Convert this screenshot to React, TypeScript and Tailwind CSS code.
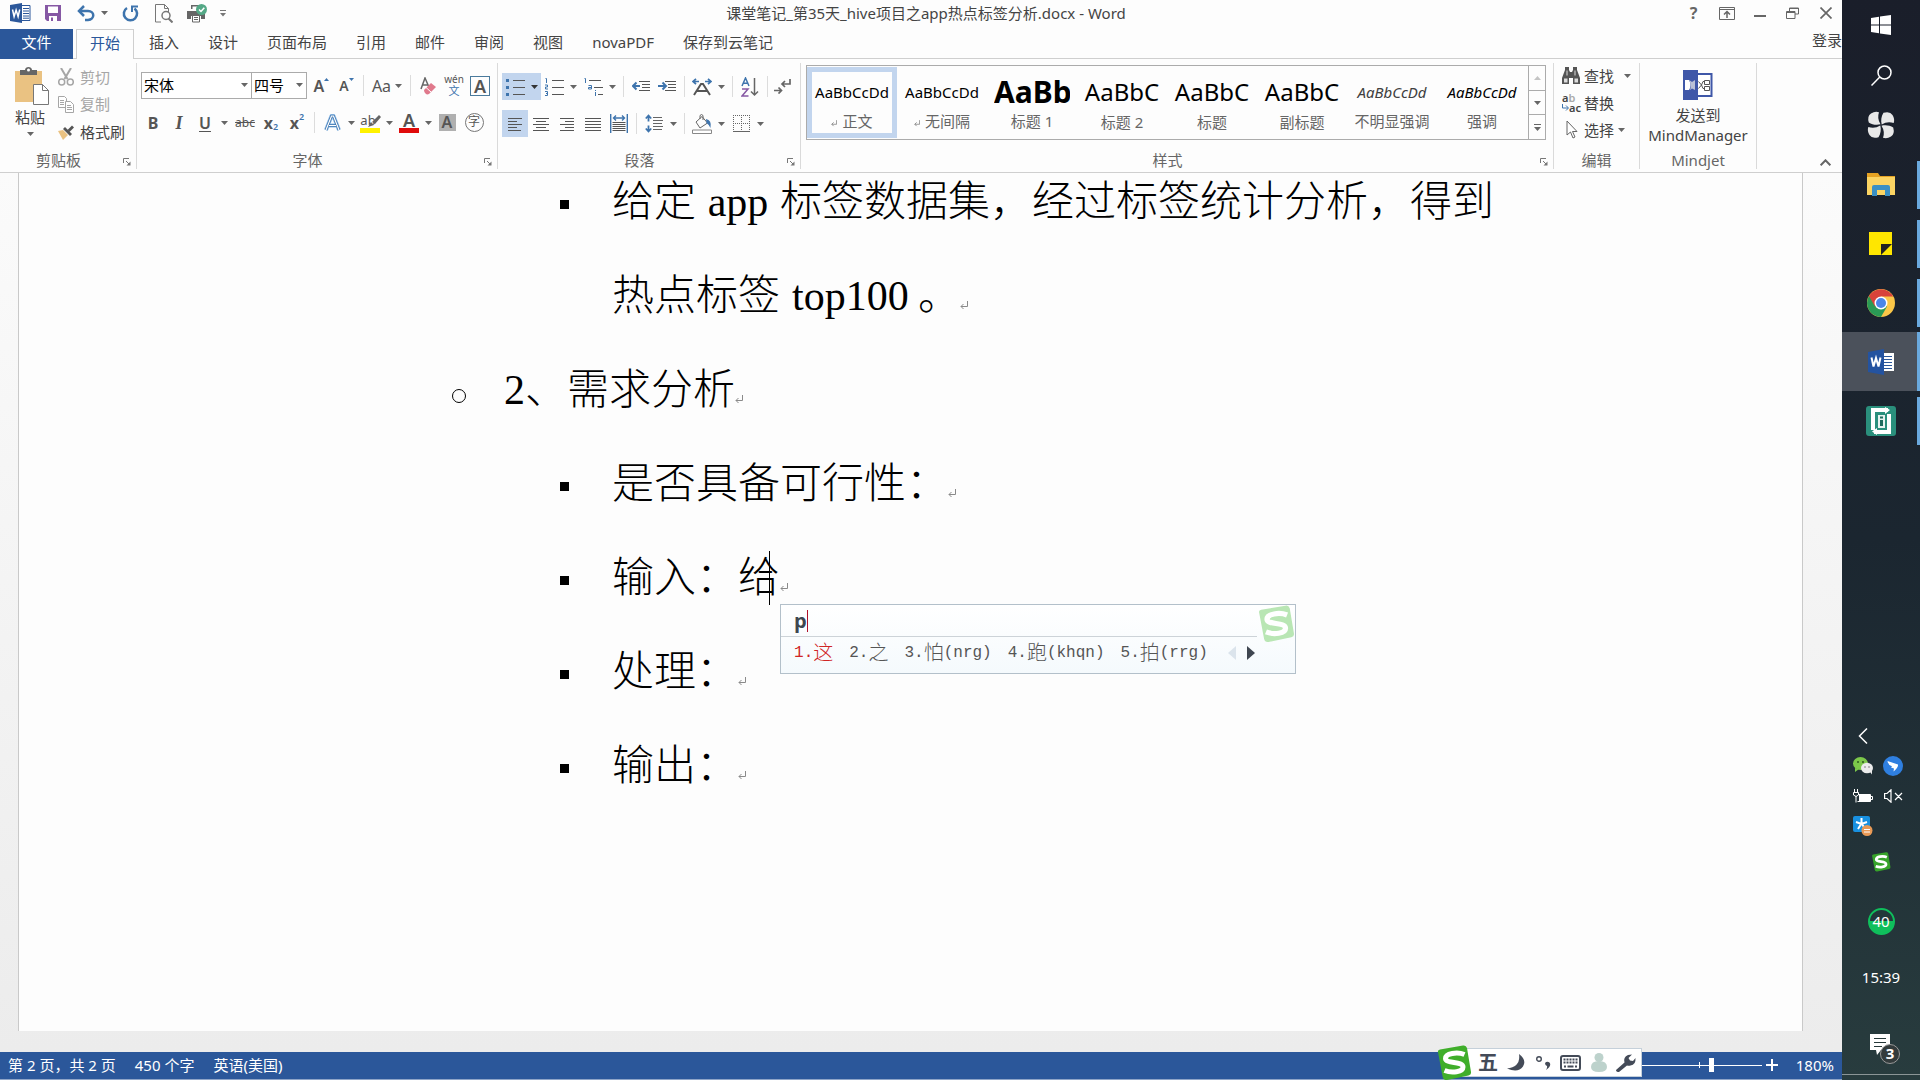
import { ReactNode } from "react";
import clsx from "clsx";

const TABS = ["插入", "设计", "页面布局", "引用", "邮件", "审阅", "视图", "novaPDF", "保存到云笔记"];

const STYLES = [
  { name: "正文", sample: "AaBbCcDd", look: "text-[15px] text-black", mark: true, selected: true },
  { name: "无间隔", sample: "AaBbCcDd", look: "text-[15px] text-black", mark: true },
  { name: "标题 1", sample: "AaBb", look: "text-[30px] font-bold text-black" },
  { name: "标题 2", sample: "AaBbC", look: "text-2xl text-black" },
  { name: "标题", sample: "AaBbC", look: "text-2xl text-black" },
  { name: "副标题", sample: "AaBbC", look: "text-2xl text-black" },
  { name: "不明显强调", sample: "AaBbCcDd", look: "text-[15px] italic text-[#404040]" },
  { name: "强调", sample: "AaBbCcDd", look: "text-[15px] italic text-black" },
];

const CANDIDATES = [
  { word: "这", code: "" },
  { word: "之", code: "" },
  { word: "怕", code: "(nrg)" },
  { word: "跑", code: "(khqn)" },
  { word: "拍", code: "(rrg)" },
];

/* ---------- small shared pieces ---------- */

function Caret({ className = "text-[#666]" }: { className?: string }) {
  return (
    <svg width="7" height="4" viewBox="0 0 7 4" className={className}>
      <path d="M0 0h7L3.5 4z" fill="currentColor" />
    </svg>
  );
}

type ToolProps = {
  label: string;
  children: ReactNode;
  className?: string;
  active?: boolean;
};

function Tool({ label, children, className = "w-[26px]", active }: ToolProps) {
  return (
    <button
      aria-label={label}
      className={clsx(
        "flex h-[27px] shrink-0 items-center justify-center",
        className,
        active && "bg-[#c2d5ee]"
      )}
    >
      {children}
    </button>
  );
}

function DropTool({ label, children, active }: ToolProps) {
  return (
    <button
      aria-label={label}
      className={clsx("flex h-[27px] w-[39px] shrink-0 items-center", active && "bg-[#c2d5ee]")}
    >
      <span className="flex w-[26px] justify-center">{children}</span>
      <span className="flex w-[13px] justify-center">
        <Caret className={active ? "text-[#333]" : "text-[#666]"} />
      </span>
    </button>
  );
}

function Sep() {
  return <div className="mx-1 h-[21px] w-px shrink-0 bg-[#dcdcdc]" />;
}

type GroupProps = {
  title: string;
  children: ReactNode;
  className?: string;
  launcher?: boolean;
};

function Group({ title, children, className, launcher }: GroupProps) {
  return (
    <section className={clsx("mt-1 flex h-[106px] flex-col border-r border-[#dadada]", className)}>
      <div className="min-h-0 flex-1">{children}</div>
      <div className="flex h-[18px] items-center text-[#666]">
        <h2 className="flex-1 text-center leading-[18px]">{title}</h2>
        {launcher && (
          <button aria-label={`${title}设置`} className="flex w-[19px] justify-center pt-1">
            <svg width="8" height="8" viewBox="0 0 8 8" fill="none" stroke="#777">
              <path d="M.5 5V.5H6M3 3l4 4" />
              <path d="M7.5 3.5v4h-4z" fill="#777" stroke="none" />
            </svg>
          </button>
        )}
      </div>
    </section>
  );
}

function ParaMark({ className = "text-[#8a8a8a]" }: { className?: string }) {
  return (
    <svg width="8" height="9" viewBox="0 0 8 9" fill="none" stroke="currentColor" className={className}>
      <path d="M7.5 0v5.5H1" />
      <path d="M3.5 3L1 5.5 3.5 8" />
    </svg>
  );
}

function SogouLogo({ size, className }: { size: number; className?: string }) {
  return (
    <svg width={size} height={size} viewBox="0 0 36 36" className={className}>
      <path d="M2 7Q1.500 5 4 4.500L27 .6Q30 0 31 3l4 24q.5 3-2.500 3.600L11 35q-3.500.600-4.300-3z" fill="currentColor" />
      <path
        d="M28.500 9.500C21 6.500 9.500 8.500 9.500 13.500c0 5.500 17.500 2.500 17.500 8.500C27 27 16 28.500 8.500 25.500"
        fill="none"
        stroke="#fff"
        strokeWidth="5"
      />
    </svg>
  );
}

function WordLogo() {
  return (
    <svg width="21" height="20" viewBox="0 0 21 20">
      <path d="M11 2.500h9v15h-9z" fill="#fff" stroke="#2b579a" />
      <path d="M13 5.500h6M13 8h6M13 10.500h6M13 13h6M13 15.200h6" stroke="#2b579a" />
      <path d="M0 2l12-2v20L0 18z" fill="#2b579a" />
      <path d="M2.500 6.500l1.600 7 2-6.500 2 6.500 1.600-7" fill="none" stroke="#fff" strokeWidth="1.500" />
    </svg>
  );
}

/* ---------- title bar and tabs ---------- */

function TitleBar() {
  return (
    <header className="flex h-[29px] items-center pb-[3px] text-[#444]">
      <div className="flex flex-1 items-center pl-[10px]">
        <WordLogo />
        <button aria-label="保存" className="ml-[14px]">
          <svg width="16" height="16" viewBox="0 0 16 16">
            <path d="M0 0h16v16H2l-2-2z" fill="#8658a4" />
            <path d="M3 1.500h10V8H3zM4 11h8v5H4z" fill="#fff" />
            <path d="M6 12.500h2V16H6z" fill="#8658a4" />
          </svg>
        </button>
        <button aria-label="撤消" className="ml-4 flex items-center gap-[6px]">
          <svg width="18" height="17" viewBox="0 0 18 17" fill="none" stroke="#3e74ad" strokeWidth="2.500">
            <path d="M2 6h9c7 0 7 8.500 0 9H8" />
            <path d="M7 1L2 6l5 5" />
          </svg>
          <Caret />
        </button>
        <button aria-label="恢复" className="ml-[14px]">
          <svg width="17" height="17" viewBox="0 0 17 17" fill="none" stroke="#3e74ad" strokeWidth="2.500">
            <path d="M5 3a6.600 6.600 0 1 0 7.500.4" />
            <path d="M10 7V1.500h6" strokeWidth="2" />
          </svg>
        </button>
        <button aria-label="打印预览" className="ml-4">
          <svg width="18" height="19" viewBox="0 0 18 19" fill="none" stroke="#777">
            <path d="M6 18H.5V.5h9l4 4V8M9.500.5v4h4" />
            <circle cx="11" cy="11.500" r="4" strokeWidth="1.500" />
            <path d="M13.500 14.500l4 4" strokeWidth="2" />
          </svg>
        </button>
        <button aria-label="快速打印" className="ml-[14px]">
          <svg width="20" height="19" viewBox="0 0 20 19">
            <path d="M4 1h8v4H4zM0 7h18v8h-4v-3H4v3H0z" fill="#666" />
            <path d="M5.500 2.500h6V7h-6z" fill="#fff" />
            <path d="M5.500 11.500h7V18h-7z" fill="#fff" stroke="#666" />
            <path d="M7 13.500h4M7 15.500h4" stroke="#666" />
            <circle cx="14.500" cy="5.500" r="5.500" fill="#54a886" />
            <path d="M12 5.500l2 2 3.300-3.700" fill="none" stroke="#fff" strokeWidth="1.500" />
          </svg>
        </button>
        <button aria-label="自定义快速访问工具栏" className="ml-[13px]">
          <svg width="6" height="7" viewBox="0 0 6 7" fill="#777">
            <path d="M0 0h6v1H0zM0 3h6L3 6.500z" />
          </svg>
        </button>
      </div>
      <h1 className="text-[15px]">课堂笔记_第35天_hive项目之app热点标签分析.docx - Word</h1>
      <div className="flex flex-1 items-center justify-end text-[#666]">
        <Tool label="帮助" className="w-[33px] text-base font-bold">?</Tool>
        <Tool label="功能区显示选项" className="w-[33px]">
          <svg width="16" height="13" viewBox="0 0 16 13" fill="none" stroke="currentColor">
            <path d="M.5.5h15v12H.5zM.5 2.500h15" />
            <path d="M8 11V5M5 7.500l3-3 3 3" strokeWidth="1.500" />
          </svg>
        </Tool>
        <Tool label="最小化" className="w-[33px]">
          <svg width="12" height="10" viewBox="0 0 12 10">
            <path d="M0 7h12v2H0z" fill="currentColor" />
          </svg>
        </Tool>
        <Tool label="还原" className="w-[33px]">
          <svg width="13" height="12" viewBox="0 0 13 12" fill="none" stroke="currentColor">
            <path d="M3.500 4V1h9v6H9M.5 4.500H9v7H.5zM.5 5.500H9M3.500 1.500h9" />
          </svg>
        </Tool>
        <Tool label="关闭" className="w-[33px]">
          <svg width="12" height="12" viewBox="0 0 12 12" stroke="currentColor" strokeWidth="1.700">
            <path d="M.5.5l11 11M11.500.5l-11 11" />
          </svg>
        </Tool>
      </div>
    </header>
  );
}

function TabBar() {
  return (
    <nav className="flex h-[30px] items-stretch gap-px border-b border-[#cfcfcf] text-[#444]">
      <button className="mr-[2px] h-[30px] w-[73px] bg-[#2b579a] pb-1 text-white">文件</button>
      <button className="h-[30px] border border-b-0 border-[#cfcfcf] bg-[#fdfdfd] px-[13px] pb-1 text-[#2b579a]">
        开始
      </button>
      {TABS.map((tab) => (
        <button key={tab} className="px-[14px] pb-1">
          {tab}
        </button>
      ))}
      <a href="#login" className="ml-auto self-start leading-[23px]">
        登录
      </a>
    </nav>
  );
}

/* ---------- ribbon ---------- */

function ClipboardGroup() {
  return (
    <Group title="剪贴板" className="w-[137px]" launcher>
      <div className="flex text-[#444]">
        <button className="flex w-[64px] flex-col items-center pt-1">
          <svg width="36" height="39" viewBox="0 0 36 39">
            <path d="M1 4h27v31H1z" fill="#eac282" />
            <path d="M6 3h5c0-4 7-4 7 0h5v5H6z" fill="#666" />
            <circle cx="14.500" cy="3" r="1.500" fill="#fff" />
            <path d="M19.500 17.500h9l6 6v14h-15z" fill="#fff" stroke="#777" />
            <path d="M28.500 17.500v6h6" fill="none" stroke="#777" />
          </svg>
          <span className="pr-1 leading-[22px]">粘贴</span>
          <span className="flex h-3 items-center pr-1">
            <Caret />
          </span>
        </button>
        <div className="-ml-[6px] flex flex-col">
          <button className="flex h-[27px] items-center gap-[6px] text-[#a6a6a6]">
            <svg width="16" height="18" viewBox="0 0 16 18" fill="none" stroke="currentColor">
              <path d="M3 0l6.500 11M13 0L6.500 11" strokeWidth="2" />
              <circle cx="3.700" cy="14" r="3" strokeWidth="1.500" />
              <circle cx="12.300" cy="14" r="3" strokeWidth="1.500" />
            </svg>
            剪切
          </button>
          <button className="flex h-7 items-center gap-[6px] text-[#a6a6a6]">
            <svg width="16" height="17" viewBox="0 0 16 17" fill="#fff" stroke="currentColor">
              <path d="M.5.5h6l2 2v9h-8z" />
              <path d="M2 4.500h4M2 6.500h4M2 8.500h4" />
              <path d="M7.500 5.500h5l3 3v8h-8z" />
              <path d="M9 9.500h4M9 11.500h5M9 13.500h5" />
            </svg>
            复制
          </button>
          <button className="flex h-7 items-center gap-[6px]">
            <svg width="16" height="15" viewBox="0 0 16 15">
              <path d="M0 6l5-1 5 5-5 5z" fill="#eac282" />
              <path d="M5 4l2-2 7 7-2 2z" fill="#555" />
              <path d="M9.500 5L14 .5l2 2L11.500 7z" fill="#555" />
            </svg>
            格式刷
          </button>
        </div>
      </div>
    </Group>
  );
}

function ComboBox({ label, value, className }: { label: string; value: string; className: string }) {
  return (
    <div className={clsx("relative", className)}>
      <select
        aria-label={label}
        className="h-[27px] w-full appearance-none border border-[#ababab] bg-white pb-px pl-[2px] text-black"
      >
        <option>{value}</option>
      </select>
      <Caret className="pointer-events-none absolute top-[11px] right-1 text-[#666]" />
    </div>
  );
}

function FontGroup() {
  return (
    <Group title="字体" className="w-[361px]" launcher>
      <div className="flex flex-col gap-[10px] pt-[9px] pl-1 text-[#555]">
        <div className="flex items-center">
          <ComboBox label="字体" value="宋体" className="w-[111px]" />
          <ComboBox label="字号" value="四号" className="mr-[2px] -ml-px w-[56px]" />
          <Tool label="增大字号" className="w-[25px]">
            <span className="text-base font-semibold">A</span>
            <svg width="5" height="3" viewBox="0 0 5 3" className="mb-3">
              <path d="M0 3h5L2.500 0z" fill="#3e74ad" />
            </svg>
          </Tool>
          <Tool label="减小字号" className="w-[25px]">
            <span className="text-sm font-semibold">A</span>
            <svg width="5" height="3" viewBox="0 0 5 3" className="mb-3">
              <path d="M0 0h5L2.500 3z" fill="#3e74ad" />
            </svg>
          </Tool>
          <Sep />
          <Tool label="更改大小写" className="w-[38px] gap-1">
            <span className="text-base">Aa</span>
            <Caret />
          </Tool>
          <Sep />
          <Tool label="清除所有格式">
            <svg width="17" height="18" viewBox="0 0 17 18">
              <path d="M1 12L5 1l3.500 8M2.500 8h5" fill="none" stroke="#666" strokeWidth="1.500" />
              <path d="M4 13l7-7 5 4-7 7q-2 1-3.500-.500T4 13z" fill="#e0798c" />
              <path d="M6 10.500l5 4.500" stroke="#fff" />
            </svg>
          </Tool>
          <Tool label="拼音指南" className="w-[26px] flex-col">
            <span className="text-[10px] leading-[10px]">wén</span>
            <span className="text-[11px] leading-[13px] text-[#3e74ad]">文</span>
          </Tool>
          <Tool label="字符边框">
            <span className="h-5 w-5 border border-[#4a7a9c] text-center text-lg leading-[18px] font-semibold">A</span>
          </Tool>
        </div>
        <div className="flex items-center">
          <Tool label="加粗" className="w-[24px] text-base font-bold">B</Tool>
          <Tool label="倾斜" className="w-[28px] font-[family-name:'Liberation_Serif',serif] text-lg font-bold italic">
            I
          </Tool>
          <Tool label="下划线" className="w-[24px] text-base font-semibold underline underline-offset-2">U</Tool>
          <Tool label="下划线样式" className="w-[15px]"><Caret /></Tool>
          <Tool label="删除线"><span className="text-xs line-through">abc</span></Tool>
          <Tool label="下标">
            <span className="text-base font-bold">x</span>
            <span className="mt-2 text-[9px] font-semibold text-[#3e74ad]">2</span>
          </Tool>
          <Tool label="上标">
            <span className="text-base font-bold">x</span>
            <span className="mb-3 text-[9px] font-semibold text-[#3e74ad]">2</span>
          </Tool>
          <Sep />
          <Tool label="文本效果">
            <svg width="17" height="18" viewBox="0 0 17 18" fill="none">
              <path d="M2 16L7.500 2h2L15 16M5 11.500h7" stroke="#8fbde8" strokeWidth="4" strokeLinejoin="round" />
              <path d="M2 16L7.500 2h2L15 16M5 11.500h7" stroke="#3e74ad" strokeWidth="2.600" />
              <path d="M2 16L7.500 2h2L15 16M5 11.500h7" stroke="#fff" strokeWidth="1.200" />
            </svg>
          </Tool>
          <Tool label="文本效果选项" className="w-[13px]"><Caret /></Tool>
          <Tool label="突出显示" className="w-[24px] flex-col">
            <span className="relative pr-1 text-[13px] leading-[14px]">
              ab
              <svg width="13" height="13" viewBox="0 0 13 13" className="absolute top-[2px] left-2">
                <path d="M0 12l3-5 3 3zM4 7l7-7 2 2-6 7z" fill="#666" />
              </svg>
            </span>
            <span className="mt-px h-[5px] w-5 bg-[#fff200]" />
          </Tool>
          <Tool label="突出显示颜色" className="w-[15px]"><Caret /></Tool>
          <Tool label="字体颜色" className="w-[24px] flex-col">
            <span className="text-lg leading-[15px] font-semibold">A</span>
            <span className="h-[5px] w-5 bg-[#e00b0b]" />
          </Tool>
          <Tool label="字体颜色选项" className="w-[15px]"><Caret /></Tool>
          <Tool label="字符底纹" className="w-[22px]">
            <span className="h-[17px] w-[17px] bg-[#b0b0b0] text-center text-base leading-[17px] font-semibold">A</span>
          </Tool>
          <Tool label="带圈字符" className="w-[32px]">
            <span className="h-[19px] w-[19px] rounded-full border border-[#777] text-center text-xs leading-[16px]">
              字
            </span>
          </Tool>
        </div>
      </div>
    </Group>
  );
}

function AlignIcon({ d }: { d: string }) {
  return (
    <svg width="16" height="14" viewBox="0 0 16 14" stroke="#555" fill="none">
      <path d={d} />
    </svg>
  );
}

function ParagraphGroup() {
  return (
    <Group title="段落" className="w-[303px]" launcher>
      <div className="flex flex-col gap-[10px] pt-[10px] pl-1">
        <div className="flex items-center">
          <DropTool label="项目符号" active>
            <svg width="19" height="18" viewBox="0 0 19 18">
              <path d="M7 2.500h12M7 9.500h12M7 16.500h12" stroke="#555" />
              <path d="M0 1h3v3H0zM0 8h3v3H0zM0 15h3v3H0z" fill="#3e74ad" />
            </svg>
          </DropTool>
          <DropTool label="编号">
            <svg width="19" height="18" viewBox="0 0 19 18" fill="none">
              <path d="M7 2.500h12M7 9.500h12M7 16.500h12" stroke="#555" />
              <path d="M.5.5h1V5M0 7h2.500v2H.5v2H3M0 13.500h2.500v4H0M1 15.500h1.500" stroke="#3e74ad" />
            </svg>
          </DropTool>
          <DropTool label="多级列表">
            <svg width="19" height="18" viewBox="0 0 19 18" fill="none">
              <path d="M5 2.500h12M10 9.500h9M14 16.500h5" stroke="#555" />
              <path d="M.5.5h1V5M4.500 7.500h3V11h-3V9.500h3M11.500 14v4M11.500 12v1" stroke="#3e74ad" />
            </svg>
          </DropTool>
          <Sep />
          <Tool label="减少缩进量">
            <svg width="18" height="13" viewBox="0 0 18 13" fill="none">
              <path d="M7 1.500h11M10 4.500h8M10 7.500h8M7 10.500h11" stroke="#555" />
              <path d="M8 6H1.500M4.500 2.500L1 6l3.500 3.500" stroke="#3e74ad" strokeWidth="2" />
            </svg>
          </Tool>
          <Tool label="增加缩进量">
            <svg width="18" height="13" viewBox="0 0 18 13" fill="none">
              <path d="M7 1.500h11M10 4.500h8M10 7.500h8M7 10.500h11" stroke="#555" />
              <path d="M0 6h7M4.500 2.500L8 6 4.500 9.500" stroke="#3e74ad" strokeWidth="2" />
            </svg>
          </Tool>
          <Sep />
          <DropTool label="中文版式">
            <svg width="20" height="18" viewBox="0 0 20 18" fill="none">
              <path d="M2 17L9 6h2l7 11M5 13h10" stroke="#555" strokeWidth="2" />
              <path d="M1 3.500h6M4 .8L1 3.500l3 2.700M19 3.500h-6M16 .8l3 2.700-3 2.700" stroke="#3e74ad" strokeWidth="1.700" />
            </svg>
          </DropTool>
          <Sep />
          <Tool label="排序">
            <svg width="18" height="20" viewBox="0 0 18 20" fill="none">
              <path d="M1 9l3.500-8L8 9M2.300 6.300h4.400" stroke="#3e74ad" strokeWidth="1.500" />
              <path d="M1 12h6l-6 7h6.500" stroke="#8658a4" strokeWidth="1.500" />
              <path d="M13.500 1v17M10 14.500l3.500 3.500 3.500-3.500" stroke="#666" strokeWidth="1.500" />
            </svg>
          </Tool>
          <Sep />
          <Tool label="显示编辑标记" className="w-5">
            <svg width="17" height="15" viewBox="0 0 17 15" fill="none" stroke="#666" strokeWidth="1.700">
              <path d="M16 0v5H8M11 2L8 5l3 3M0 11.500h7M4.500 8.500l3 3-3 3" />
            </svg>
          </Tool>
        </div>
        <div className="flex items-center">
          <Tool label="左对齐" active><AlignIcon d="M1 1.500h14M1 4.500h9M1 7.500h14M1 10.500h9M1 13.500h13" /></Tool>
          <Tool label="居中"><AlignIcon d="M0 1.500h16M3 4.500h10M0 7.500h16M3 10.500h10M0 13.500h16" /></Tool>
          <Tool label="右对齐"><AlignIcon d="M1 1.500h14M6 4.500h9M1 7.500h14M6 10.500h9M1 13.500h14" /></Tool>
          <Tool label="两端对齐"><AlignIcon d="M0 1.500h16M0 4.500h16M0 7.500h16M0 10.500h16M0 13.500h16" /></Tool>
          <Tool label="分散对齐">
            <svg width="18" height="19" viewBox="0 0 18 19" fill="none">
              <path d="M.7 0v19M17.300 0v19M4 4h10M6 1.500L3.500 4 6 6.500M12 1.500L14.500 4 12 6.500" stroke="#3e74ad" strokeWidth="1.400" />
              <path d="M2.500 8.500h13M2.500 10.500h13M2.500 12.500h13M2.500 14.500h13M2.500 16.500h13" stroke="#555" />
            </svg>
          </Tool>
          <Sep />
          <DropTool label="行和段落间距">
            <svg width="18" height="19" viewBox="0 0 18 19" fill="none">
              <path d="M8 3.500h9M8 6.500h10M8 9.500h9M8 12.500h10M8 15.500h9" stroke="#666" />
              <path d="M3.500 1.500v6M.8 4.500l2.700-3 2.700 3M3.500 11.500v6M.8 14.500l2.700 3 2.700-3" stroke="#3e74ad" strokeWidth="1.800" />
            </svg>
          </DropTool>
          <Sep />
          <DropTool label="底纹">
            <svg width="20" height="20" viewBox="0 0 20 20" fill="none">
              <path d="M4 8l6-5.500L15.500 9 8 14zM8 5V1.500q1.500-2 3 0V6" stroke="#666" />
              <path d="M14 5q6 1 4.500 9-1-3-4-5z" fill="#3e74ad" />
              <path d="M.5 16h19v3.500H.5z" stroke="#888" fill="#fff" />
            </svg>
          </DropTool>
          <DropTool label="边框">
            <svg width="17" height="17" viewBox="0 0 17 17" fill="none" stroke="#666" strokeDasharray="1 1">
              <path d="M0 .5h17M.5 0v17M16.500 0v17M8.500 0v17M0 8.500h17" />
              <path d="M0 16.500h17" strokeDasharray="none" />
            </svg>
          </DropTool>
        </div>
      </div>
    </Group>
  );
}

function StylesGroup() {
  return (
    <Group title="样式" className="min-w-0 flex-1" launcher>
      <div className="mt-[2px] mr-[7px] ml-[5px] flex h-[75px] border border-[#ababab]">
        <ul className="flex flex-1 overflow-hidden">
          {STYLES.map((style) => (
            <li key={style.name} className="w-[90px] shrink-0">
              <button
                className={clsx(
                  "mt-px flex h-[71px] w-full flex-col items-center border-[5px] pt-[5px]",
                  style.selected ? "border-[#c2d5ee]" : "border-transparent"
                )}
              >
                <span
                  className={clsx(
                    "flex h-[30px] items-center whitespace-nowrap",
                    style.sample === "AaBb" && "w-[76px] overflow-hidden",
                    style.look
                  )}
                >
                  {style.sample}
                </span>
                <span className="mt-[3px] flex h-6 items-center gap-[5px] whitespace-nowrap text-[#666]">
                  {style.mark && <ParaMark className="mt-1 w-[6px] text-[#777]" />}
                  {style.name}
                </span>
              </button>
            </li>
          ))}
        </ul>
        <div className="flex w-[17px] flex-col divide-y divide-[#ababab] border-l border-[#ababab]">
          <button aria-label="上一行" className="flex flex-1 items-center justify-center">
            <Caret className="rotate-180 text-[#c4c4c4]" />
          </button>
          <button aria-label="下一行" className="flex flex-1 items-center justify-center">
            <Caret />
          </button>
          <button aria-label="其他" className="flex flex-1 flex-col items-center justify-center gap-[2px]">
            <span className="h-px w-[7px] bg-[#666]" />
            <Caret />
          </button>
        </div>
      </div>
    </Group>
  );
}

function EditGroup() {
  return (
    <Group title="编辑" className="w-[86px]">
      <div className="-mt-px flex flex-col pl-2 text-[#444]">
        <button className="flex h-[27px] items-center gap-1">
          <svg width="18" height="17" viewBox="0 0 18 17" fill="#555">
            <path d="M3 0h4v3l1 2h2l1-2V0h4v3l3 8v6h-7v-6H7v6H0v-6l3-8z" />
            <path d="M2 11.500h3.500v4H2zM12.500 11.500H16v4h-3.500zM4.500 3.500h1v5h-1zM12.500 3.500h1v5h-1z" fill="#ddd" />
          </svg>
          查找
          <span className="ml-[6px]">
            <Caret />
          </span>
        </button>
        <button className="flex h-[27px] items-center gap-1">
          <span className="flex w-[18px] flex-col text-[11px] leading-[10px] font-semibold">
            <span className="text-left">
              a<span className="text-[#aaa]">b</span>
            </span>
            <span className="flex items-center">
              <svg width="7" height="7" viewBox="0 0 7 7" fill="none" stroke="#3e74ad" className="shrink-0">
                <path d="M.5 0v4H6M4 1.500L6.500 4 4 6.500" />
              </svg>
              ac
            </span>
          </span>
          替换
        </button>
        <button className="flex h-[27px] items-center gap-1">
          <svg width="18" height="19" viewBox="0 0 18 19" fill="#fff" stroke="#666">
            <path d="M5 1v14l3.500-3 2.500 6 2-1-2.500-5.500H15z" />
          </svg>
          选择
          <Caret />
        </button>
      </div>
    </Group>
  );
}

function MindjetGroup() {
  return (
    <Group title="Mindjet" className="w-[117px]">
      <button className="flex w-full flex-col items-center pt-[7px] leading-5 text-[#444]">
        <svg width="30" height="30" viewBox="0 0 30 30" className="mb-[5px]">
          <path d="M13 4h15.500v22H13z" fill="#fff" stroke="#3f57a8" strokeWidth="2" />
          <path d="M0 0h15v30H0z" fill="#3f57a8" />
          <path d="M2 10h4q3 5 0 10H2z" fill="#fff" />
          <path d="M6 10q3 5 1 10l2-1.500L12 20V10L9 12z" fill="#b9c0d6" />
          <path d="M15.500 11.500l3 3.500-3 3.500M22 11.500h-2l-1.500 3.500 1.500 3.500h2" fill="none" stroke="#555" />
          <path d="M21.500 10.500h5v4h-5zM21.500 16.500h5v4h-5z" fill="#fff" stroke="#555" />
        </svg>
        <span>发送到</span>
        <span>MindManager</span>
      </button>
    </Group>
  );
}

function Ribbon() {
  return (
    <div className="flex h-[114px] border-b border-[#cfcfcf]">
      <ClipboardGroup />
      <FontGroup />
      <ParagraphGroup />
      <StylesGroup />
      <EditGroup />
      <MindjetGroup />
      <div className="flex w-[85px] items-end justify-end pr-[11px] pb-[6px]">
        <button aria-label="折叠功能区">
          <svg width="11" height="7" viewBox="0 0 11 7" fill="none" stroke="#666" strokeWidth="2">
            <path d="M.7 6.300l4.800-5 4.800 5" />
          </svg>
        </button>
      </div>
    </div>
  );
}

/* ---------- document ---------- */

function Line({ children }: { children: ReactNode }) {
  return (
    <div className="flex items-center whitespace-nowrap">
      {children}
      <ParaMark className="mt-[18px] text-[#8a8a8a]" />
    </div>
  );
}

function SquareItem({ children }: { children: ReactNode }) {
  return (
    <li className="flex pl-[541px]">
      <span className="mt-[45px] mr-[43px] h-[9px] w-[9px] shrink-0 bg-black" />
      <div>{children}</div>
    </li>
  );
}

function ImeWindow() {
  return (
    <div className="absolute top-[73px] left-[42px] z-10 flex h-[70px] w-[516px] flex-col border border-[#b3c0ca] bg-gradient-to-b from-white to-[#f5fafd] leading-none">
      <div className="mr-[38px] flex h-8 items-center border-b border-[#cdd3d8] pl-[13px]">
        <span className="font-[family-name:'Open_Sans',sans-serif] text-xl leading-[22px] font-bold text-[#3f4650]">p</span>
        <span className="h-[22px] w-px bg-[#b0102a]" />
      </div>
      <div className="flex flex-1 items-center pb-1 pl-[13px]">
        <ol className="flex gap-4 text-xl leading-6 text-[#555]">
          {CANDIDATES.map((item, i) => (
            <li key={item.word} className={clsx("flex items-center", i === 0 && "text-[#d02525]")}>
              <span className="font-[family-name:'Liberation_Mono',monospace] text-base">{i + 1}.</span>
              {item.word}
              <span className="font-[family-name:'Liberation_Mono',monospace] text-base">{item.code}</span>
            </li>
          ))}
        </ol>
        <button aria-label="上一页" className="ml-5">
          <svg width="8" height="14" viewBox="0 0 8 14">
            <path d="M8 0v14L0 7z" fill="#dbe4ec" />
          </svg>
        </button>
        <button aria-label="下一页" className="ml-[11px]">
          <svg width="8" height="14" viewBox="0 0 8 14">
            <path d="M0 0v14l8-7z" fill="#3f4650" />
          </svg>
        </button>
      </div>
      <SogouLogo size={38} className="absolute top-0 right-0 text-[#b9e6b4]" />
    </div>
  );
}

function Document() {
  return (
    <main className="flex-1 overflow-hidden bg-gradient-to-b from-[#fbfbfb] to-[#ececec] pr-[39px] pb-[21px] pl-[18px]">
      <article className="h-full overflow-hidden border-x border-[#c9c9c9] bg-[#fdfdfd] font-[family-name:'Liberation_Serif','Noto_Sans_CJK_SC',serif] text-[42px] leading-[94px] font-light text-black">
        <ul className="-mt-[18px]">
          <SquareItem>
            <div className="whitespace-nowrap">
              给定<span className="inline-block w-[84px] text-center">app</span>标签数据集，经过标签统计分析，得到
            </div>
            <Line>
              热点标签<span className="inline-block w-[138px] pl-3">top100</span>。
            </Line>
          </SquareItem>
          <li className="flex pl-[433px]">
            <span className="mt-[46px] mr-[38px] h-[14px] w-[14px] shrink-0 rounded-full border border-black" />
            <Line>2、需求分析</Line>
          </li>
          <SquareItem>
            <Line>是否具备可行性：</Line>
          </SquareItem>
          <SquareItem>
            <Line>
              输入：
              <span className="relative">
                给
                <span className="absolute top-[20px] left-[31px] h-[54px] w-px bg-black" />
                <ImeWindow />
              </span>
            </Line>
          </SquareItem>
          <SquareItem>
            <Line>处理：</Line>
          </SquareItem>
          <SquareItem>
            <Line>输出：</Line>
          </SquareItem>
        </ul>
      </article>
    </main>
  );
}

/* ---------- status bar ---------- */

function SogouToolbar() {
  return (
    <div className="absolute right-[200px] bottom-[2px] flex h-[29px] w-[187px] items-center border border-[#c5d0da] bg-white text-[#444b58]">
      <SogouLogo size={36} className="-ml-5 shrink-0 text-[#3fae2a]" />
      <button className="ml-[5px] w-[22px] text-xl leading-none font-bold">五</button>
      <button aria-label="全半角" className="ml-2">
        <svg width="18" height="17" viewBox="0 0 18 17" fill="currentColor">
          <path d="M12 0q8 6 4 12.500-5 7-16 2Q14 13 12 0z" />
        </svg>
      </button>
      <button aria-label="中英文标点" className="ml-[11px]">
        <svg width="15" height="15" viewBox="0 0 15 15" fill="currentColor">
          <circle cx="3" cy="4" r="2.300" fill="none" stroke="currentColor" strokeWidth="1.400" />
          <path d="M9 8q2-2 4.500-.500Q16 11 10 15q1.500-2.500 1-4-2-.500-2-3z" />
        </svg>
      </button>
      <button aria-label="软键盘" className="ml-[9px]">
        <svg width="21" height="16" viewBox="0 0 21 16" fill="none" stroke="currentColor">
          <rect x="1" y="1" width="19" height="14" rx="2" strokeWidth="2" />
          <path d="M3.500 4.500h14M3.500 7.500h14" strokeWidth="2" strokeDasharray="2 1" />
          <path d="M4 11.500h2M7.500 11.500h6M15 11.500h2" strokeWidth="2" />
        </svg>
      </button>
      <button aria-label="账户" className="ml-[10px] text-[#bdd2cc]">
        <svg width="16" height="19" viewBox="0 0 16 19" fill="currentColor">
          <circle cx="8" cy="4.500" r="4.500" />
          <path d="M0 14q0-6 8-6t8 6q0 5-8 5t-8-5z" />
        </svg>
      </button>
      <button aria-label="工具箱" className="ml-[9px]">
        <svg width="20" height="18" viewBox="0 0 20 18" fill="currentColor">
          <path d="M0 16L8.500 8.500Q7 3 12 1l4-.500L12.500 4 14 6.500l3 .5L19.500 4q.5 7-5 7.500-2 .5-3.500 0L3 18q-3 0-3-2z" />
        </svg>
      </button>
    </div>
  );
}

function StatusBar() {
  return (
    <footer className="relative flex h-7 items-center gap-[19px] border-b border-[#8fa5c8] bg-[#2b579a] pr-2 pb-px pl-2 text-white">
      <span>第 2 页，共 2 页</span>
      <span>450 个字</span>
      <span>英语(美国)</span>
      <div className="ml-auto flex items-center">
        <div className="relative flex w-[125px] items-center">
          <input
            type="range"
            aria-label="显示比例"
            min={-100}
            max={100}
            defaultValue={20}
            className="h-[14px] w-full appearance-none bg-[linear-gradient(white,white)] bg-[length:100%_1px] bg-center bg-no-repeat [&::-webkit-slider-thumb]:h-[14px] [&::-webkit-slider-thumb]:w-[5px] [&::-webkit-slider-thumb]:appearance-none [&::-webkit-slider-thumb]:bg-white"
          />
          <span className="absolute left-[62px] h-[6px] w-px bg-white" />
        </div>
        <button aria-label="放大" className="mx-1 w-[12px]">
          <svg width="12" height="12" viewBox="0 0 12 12" stroke="#fff" strokeWidth="2">
            <path d="M6 0v12M0 6h12" />
          </svg>
        </button>
        <button className="ml-[12px] w-10 text-right">180%</button>
      </div>
      <SogouToolbar />
    </footer>
  );
}

/* ---------- windows task bar ---------- */

function TaskButton({ label, children, active }: ToolProps) {
  return (
    <button
      aria-label={label}
      className={clsx("flex h-[59px] w-full items-center justify-center", active && "bg-[#4b515b]")}
    >
      <span className="ml-[2px] flex flex-1 justify-center">{children}</span>
      <span className={clsx("w-[3px] bg-[#6aa9de]", active ? "h-[59px]" : "h-12")} />
    </button>
  );
}

function TaskBar() {
  return (
    <aside className="flex w-[78px] shrink-0 flex-col bg-gradient-to-b from-[#1a1e2a] via-[#1b2630] to-[#283c3e] text-white">
      <button aria-label="开始" className="flex h-[50px] items-center justify-center">
        <svg width="20" height="20" viewBox="0 0 20 20" fill="#fff">
          <path d="M0 3l8-1.200V9.500H0zM9 1.600L20 0v9.500H9zM0 10.500h8v7.700L0 17zM9 10.500h11V20L9 18.400z" />
        </svg>
      </button>
      <button aria-label="搜索" className="flex h-[50px] items-center justify-center">
        <svg width="21" height="21" viewBox="0 0 21 21" fill="none" stroke="#fff" strokeWidth="1.500">
          <circle cx="13.500" cy="7.500" r="6.500" />
          <path d="M8.800 12L.5 20.500" />
        </svg>
      </button>
      <button aria-label="浏览器" className="mb-[5px] flex h-[50px] items-center justify-center">
        <svg width="28" height="28" viewBox="0 0 28 28" fill="#e8e8e8">
          {[0, 90, 180, 270].map((angle) => (
            <path
              key={angle}
              transform={`rotate(${angle} 14 14)`}
              d="M13.500 13.300C10 14.300 5 13.800 1.800 11.500Q0 5 4 2.500 8 0 12 1.300 9.800 7.500 13.500 13.300z"
            />
          ))}
        </svg>
      </button>
      <TaskButton label="文件资源管理器">
        <svg width="28" height="23" viewBox="0 0 28 23">
          <path d="M0 0h11l2 3h15v19H0z" fill="#e5a223" />
          <path d="M0 4h28v18H0z" fill="#fbd463" />
          <path d="M5 23V14q0-2 2-2h14q2 0 2 2v9h-5v-6h-8v6z" fill="#3a8fc4" />
        </svg>
      </TaskButton>
      <TaskButton label="便笺">
        <svg width="23" height="23" viewBox="0 0 23 23">
          <path d="M0 0h23v12H12v11H0z" fill="#ffe600" />
          <path d="M12 12h11L12 23z" fill="#222" />
          <path d="M23 12v11H12z" fill="#ffe600" />
        </svg>
      </TaskButton>
      <TaskButton label="Chrome">
        <svg width="28" height="28" viewBox="0 0 28 28">
          <circle cx="14" cy="14" r="14" fill="#fbc748" />
          <path d="M14 14L1.900 7A14 14 0 0 0 14 28l6-10.500z" fill="#2a9a55" />
          <path d="M1.900 7A14 14 0 0 1 26.100 7.500L14 7.500v6.500l-6 3.500z" fill="#d8433a" />
          <circle cx="14" cy="14" r="6.500" fill="#fff" />
          <circle cx="14" cy="14" r="5" fill="#4a86e8" />
        </svg>
      </TaskButton>
      <TaskButton label="Word" active>
        <svg width="26" height="26" viewBox="0 0 26 26">
          <path d="M14 4h12v18H14z" fill="#fff" />
          <path d="M15 7.500h9M15 10.500h9M15 13.500h9M15 16.500h9M15 19.500h9" stroke="#2b579a" />
          <path d="M0 3l16-3v26L0 23z" fill="#2453a0" />
          <path d="M3.500 8.500l2 9 2.500-8.500 2.500 8.500 2-9" fill="none" stroke="#fff" strokeWidth="2" />
        </svg>
      </TaskButton>
      <TaskButton label="录屏">
        <svg width="30" height="30" viewBox="0 0 30 30">
          <rect width="30" height="30" rx="3" fill="#2a8f7c" />
          <path d="M7 24V4h15M23 8v18H8" fill="none" stroke="#fff" strokeWidth="4" />
          <path d="M19 1l5 3-5 4zM11 22l-5 3.500 5 3.500z" fill="#fff" />
          <rect x="12" y="9" width="7" height="13" fill="#e8f3f0" />
          <path d="M14 10.500h3v2h-3zM14 14h3v6h-3z" fill="#1f6b5d" />
        </svg>
      </TaskButton>

      <div className="mt-auto grid w-[66px] grid-cols-[30px_30px] grid-rows-[30px_30px_30px_30px] place-items-center pl-[6px]">
        <button aria-label="显示隐藏的图标" className="col-start-1">
          <svg width="10" height="16" viewBox="0 0 10 16" fill="none" stroke="#fff" strokeWidth="1.500">
            <path d="M9 .5L1.500 8 9 15.500" />
          </svg>
        </button>
        <button aria-label="微信" className="col-start-1">
          <svg width="20" height="18" viewBox="0 0 20 18">
            <ellipse cx="7.500" cy="6.500" rx="7.500" ry="6.500" fill="#7cc84a" />
            <path d="M2 11v4l4-3z" fill="#7cc84a" />
            <ellipse cx="14" cy="11" rx="6" ry="5.200" fill="#ececec" />
            <path d="M17 15l2 2.500v-5z" fill="#ececec" />
            <circle cx="5" cy="5" r="1" fill="#2d5a1c" />
            <circle cx="10" cy="5" r="1" fill="#2d5a1c" />
            <circle cx="12" cy="10" r=".8" fill="#777" />
            <circle cx="16" cy="10" r=".8" fill="#777" />
          </svg>
        </button>
        <button aria-label="钉钉">
          <svg width="20" height="20" viewBox="0 0 20 20">
            <circle cx="10" cy="10" r="10" fill="#2f7fe0" />
            <path d="M4.500 5l10.500 3.500q.5 3-4.500 7l.5-3-3-1 1-1.200Q5 9 4.500 5z" fill="#fff" />
          </svg>
        </button>
        <button aria-label="电池">
          <svg width="20" height="14" viewBox="0 0 20 14" fill="none" stroke="#fff">
            <path d="M5 5.500h12.500v7H4.500" />
            <path d="M6 5h11v7H6z" fill="#fff" stroke="none" />
            <path d="M18 7.500h1.500v3H18M1.500 0v3M4.500 0v3M.5 3.500h5V6L3 7.500.5 6zM3 7v6.500" />
          </svg>
        </button>
        <button aria-label="静音">
          <svg width="19" height="14" viewBox="0 0 19 14" fill="none" stroke="#fff" strokeWidth="1.200">
            <path d="M.6 4.500H3L7 .8v12.400L3 9.500H.6zM11 4l7 7M18 4l-7 7" />
          </svg>
        </button>
        <button aria-label="云同步" className="col-start-1">
          <svg width="20" height="20" viewBox="0 0 20 20">
            <rect width="17" height="16" rx="2" fill="#1890e0" />
            <path d="M8.500 2v6M3 6l5.500 2L14 6M8.500 7.500L5 13M8.500 7.500l3.500 5" stroke="#fff" strokeWidth="2" fill="none" />
            <circle cx="14" cy="14.500" r="5.500" fill="#e99a56" />
            <path d="M11 13.500h6M11 16h6" stroke="#fff" />
          </svg>
        </button>
      </div>
      <button aria-label="搜狗输入法" className="flex h-[42px] items-center justify-center">
        <SogouLogo size={20} className="text-[#37a32a]" />
      </button>
      <div className="flex h-[76px] items-center justify-center">
        <span className="h-[27px] w-[27px] rounded-full border-2 border-[#0fbf5c] bg-gradient-to-b from-[#22383a] from-50% to-[#10bf5c] to-50% text-center text-[15px] leading-[23px]">
          40
        </span>
      </div>
      <time className="h-9 text-center text-[15px] leading-9">15:39</time>
      <button aria-label="通知" className="flex h-[79px] items-end justify-center pb-[10px] pl-2">
        <span className="relative h-[30px] w-[30px]">
          <svg width="20" height="21" viewBox="0 0 20 21">
            <path d="M0 0h20v16h-9l-4 5-1-5H0z" fill="#fff" />
            <path d="M4 4.500h12M4 8.500h12M4 12.500h8" stroke="#263839" />
          </svg>
          <span className="absolute right-0 bottom-0 h-5 w-5 rounded-full border border-[#999] bg-[#333b3c] text-[15px] leading-[17px] font-bold">
            3
          </span>
        </span>
      </button>
      <div className="h-[6px] border-t border-[#8b9596]" />
    </aside>
  );
}

function App() {
  return (
    <div className="flex h-screen overflow-hidden font-[family-name:'Noto_Sans','Noto_Sans_CJK_SC',sans-serif] text-[15px] leading-5">
      <div className="flex min-w-0 flex-1 flex-col bg-[#fdfdfd]">
        <TitleBar />
        <TabBar />
        <Ribbon />
        <Document />
        <StatusBar />
      </div>
      <TaskBar />
    </div>
  );
}

export default App;
